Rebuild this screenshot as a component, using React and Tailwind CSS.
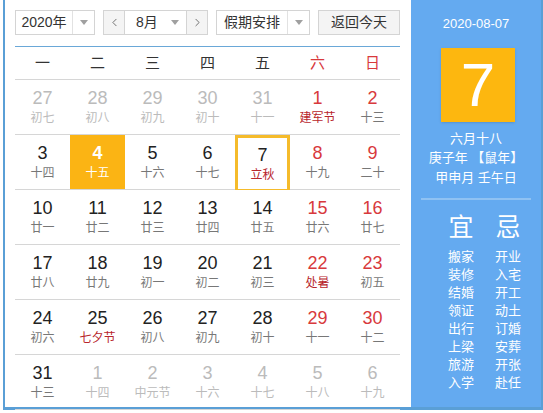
import { ChevronLeft, ChevronRight } from "lucide-react";

const FONT = { fontFamily: '"Liberation Sans", "Noto Sans CJK SC", sans-serif' };

const rows = [
  [["27", "初七", "o"], ["28", "初八", "o"], ["29", "初九", "o"], ["30", "初十", "o"], ["31", "十一", "o"], ["1", "建军节", "w", 1], ["2", "十三", "w"]],
  [["3", "十四"], ["4", "十五", "sel"], ["5", "十六"], ["6", "十七"], ["7", "立秋", "today", 1], ["8", "十九", "w"], ["9", "二十", "w"]],
  [["10", "廿一"], ["11", "廿二"], ["12", "廿三"], ["13", "廿四"], ["14", "廿五"], ["15", "廿六", "w"], ["16", "廿七", "w"]],
  [["17", "廿八"], ["18", "廿九"], ["19", "初一"], ["20", "初二"], ["21", "初三"], ["22", "处暑", "w", 1], ["23", "初五", "w"]],
  [["24", "初六"], ["25", "七夕节", "", 1], ["26", "初八"], ["27", "初九"], ["28", "初十"], ["29", "十一", "w"], ["30", "十二", "w"]],
  [["31", "十三"], ["1", "十四", "o"], ["2", "中元节", "o"], ["3", "十六", "o"], ["4", "十七", "o"], ["5", "十八", "o"], ["6", "十九", "o"]],
];

const yi = ["搬家", "装修", "结婚", "领证", "出行", "上梁", "旅游", "入学"];
const ji = ["开业", "入宅", "开工", "动土", "订婚", "安葬", "开张", "赴任"];

// small grey triangle used by the selects
const Caret = () => (
  <svg width="8" height="5" viewBox="0 0 8 5">
    <path d="M0 0h8L4 5z" fill="#a0a0a0" />
  </svg>
);

function Cell({ d }) {
  const [num, lunar, kind, fest] = d;
  let numCls = "text-[#222]";
  let lunCls = fest ? "text-[#b8262c]" : "text-[#777]";
  let box = "";
  if (kind === "o") {
    numCls = "text-[#bbb]";
    lunCls = "text-[#bbb]";
  } else if (kind === "w") {
    numCls = "text-[#d8393c]";
  } else if (kind === "sel") {
    numCls = "text-white font-bold";
    lunCls = "text-white";
    box = "bg-[#fbb414]";
  } else if (kind === "today") {
    box = "border-[3px] border-[#f5bb2b]";
  }
  return (
    <div className={`flex h-[55px] flex-col items-center justify-center border-b border-[#d6d6d6] ${box}`}>
      <div className={`text-[18px] leading-[22px] ${numCls}`}>{num}</div>
      <div className={`text-[12px] leading-[18px] ${lunCls}`}>{lunar}</div>
    </div>
  );
}

export default function App() {
  return (
    <div className="h-[413px] w-[543px] bg-white pl-[3px]" style={FONT}>
      <div className="flex h-[410px] border-b-[3px] border-l-2 border-[#5a9fd6]">
        <div className="w-[406px] pl-[10px] pr-[11px] pt-[10px]">
          <div className="flex h-[25px] gap-2 text-[14px] text-[#333]">
            <div className="flex w-[80px] border border-[#d4d4d4] bg-white">
              <span className="flex w-[56px] items-center justify-center">2020年</span>
              <span className="flex flex-1 items-center justify-center border-l border-[#e2e2e2]">
                <Caret />
              </span>
            </div>
            <div className="flex w-[105px] border border-[#d4d4d4] bg-white">
              <span className="flex w-[21px] items-center justify-center border-r border-[#d4d4d4] bg-[#f4f4f4] text-[#555]">
                <ChevronLeft size={13} strokeWidth={1.5} />
              </span>
              <span className="flex flex-1 items-center pl-[11px]">8月</span>
              <span className="flex w-[22px] items-center justify-center">
                <Caret />
              </span>
              <span className="flex w-[21px] items-center justify-center border-l border-[#d4d4d4] bg-[#f4f4f4] text-[#555]">
                <ChevronRight size={13} strokeWidth={1.5} />
              </span>
            </div>
            <div className="flex w-[94px] border border-[#d4d4d4] bg-white">
              <span className="flex w-[70px] items-center justify-center">假期安排</span>
              <span className="flex flex-1 items-center justify-center border-l border-[#e2e2e2]">
                <Caret />
              </span>
            </div>
            <div className="flex w-[82px] items-center justify-center border border-[#d4d4d4] bg-[#f4f4f4]">返回今天</div>
          </div>
          <div className="mt-[11px] border-t border-[#6aa8d8]" />
          <div className="grid h-[33px] grid-cols-7 border-b border-[#d6d6d6] text-[15px] text-[#333]">
            {["一", "二", "三", "四", "五", "六", "日"].map((w, i) => (
              <div key={w} className={`flex items-center justify-center ${i > 4 ? "text-[#d8393c]" : ""}`}>{w}</div>
            ))}
          </div>
          <div className="grid grid-cols-7">
            {rows.flat().map((d, i) => (
              <Cell key={i} d={d} />
            ))}
          </div>
        </div>
        <div className="flex w-[130px] flex-col items-center bg-[#64aaf0] text-white">
          <div className="mt-[16px] text-[13px] leading-[16px]">2020-08-07</div>
          <div className="ml-[4px] mt-[16px] flex h-[74px] w-[74px] items-center justify-center bg-[#fdb70f] text-[62px] leading-none shadow-sm">7</div>
          <div className="mt-[7px] text-[13px] leading-[19px]">六月十八</div>
          <div className="text-[13px] leading-[20px]">庚子年 【鼠年】</div>
          <div className="text-[13px] leading-[20px]">甲申月 壬午日</div>
          <div className="mt-[10px] w-[110px] border-t-2 border-[#8fc2f3]" />
          <div className="mt-[12px] flex gap-[7px] self-stretch pl-[30px]">
            {[["宜", yi], ["忌", ji]].map(([t, list]) => (
              <div key={t} className="flex w-[40px] flex-col items-center">
                <div className="text-[25px] leading-[30px]">{t}</div>
                <div className="mt-[6px] flex flex-col items-center text-[13px] leading-[18px]">
                  {list.map((x) => (
                    <span key={x}>{x}</span>
                  ))}
                </div>
              </div>
            ))}
          </div>
        </div>
        <div className="w-[2px] bg-[#5a9fd6]" />
      </div>
    </div>
  );
}
